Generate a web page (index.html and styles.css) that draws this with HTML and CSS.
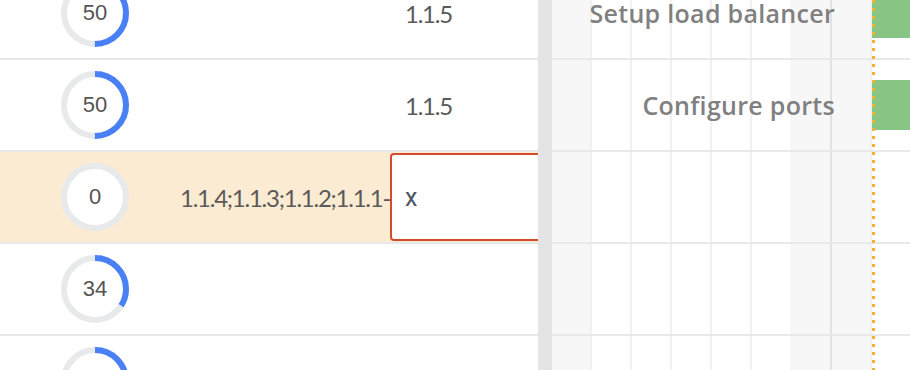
FILE: index.html
```html
<!DOCTYPE html>
<html>
<head>
<meta charset="utf-8">
<link rel="stylesheet" href="styles.css">
</head>
<body>
<div class="app">
  <div class="grid">
    <div class="grid-body">
      <div class="row">
        <div class="cell prog">
          <div class="ring">
            <svg viewBox="0 0 68 68" width="68" height="68"><circle class="track" cx="34" cy="34" r="31"/><circle class="bar" cx="34" cy="34" r="31" stroke-dasharray="97.39 194.78"/></svg>
            <span class="pct">50</span>
          </div>
        </div>
        <div class="cell deps"></div>
        <div class="cell ver">1.1.5</div>
      </div>
      <div class="row">
        <div class="cell prog">
          <div class="ring">
            <svg viewBox="0 0 68 68" width="68" height="68"><circle class="track" cx="34" cy="34" r="31"/><circle class="bar" cx="34" cy="34" r="31" stroke-dasharray="97.39 194.78"/></svg>
            <span class="pct">50</span>
          </div>
        </div>
        <div class="cell deps"></div>
        <div class="cell ver">1.1.5</div>
      </div>
      <div class="row selected">
        <div class="cell prog">
          <div class="ring">
            <svg viewBox="0 0 68 68" width="68" height="68"><circle class="track" cx="34" cy="34" r="31"/></svg>
            <span class="pct">0</span>
          </div>
        </div>
        <div class="cell deps">1.1.4;1.1.3;1.1.2;1.1.1-1.1.0</div>
        <div class="cell ver editing"><div class="editor">x</div></div>
      </div>
      <div class="row">
        <div class="cell prog">
          <div class="ring">
            <svg viewBox="0 0 68 68" width="68" height="68"><circle class="track" cx="34" cy="34" r="31"/><circle class="bar" cx="34" cy="34" r="31" stroke-dasharray="66.23 194.78"/></svg>
            <span class="pct">34</span>
          </div>
        </div>
        <div class="cell deps"></div>
        <div class="cell ver"></div>
      </div>
      <div class="row">
        <div class="cell prog">
          <div class="ring">
            <svg viewBox="0 0 68 68" width="68" height="68"><circle class="track" cx="34" cy="34" r="31"/><circle class="bar" cx="34" cy="34" r="31" stroke-dasharray="97.39 194.78"/></svg>
            <span class="pct">50</span>
          </div>
        </div>
        <div class="cell deps">1.1.5</div>
        <div class="cell ver">1.0.0</div>
      </div>
    </div>
  </div>
  <div class="splitter"></div>
  <div class="gantt">
    <div class="cols">
      <div class="col weekend first"></div>
      <div class="col"></div>
      <div class="col"></div>
      <div class="col"></div>
      <div class="col"></div>
      <div class="col"></div>
      <div class="col weekend"></div>
      <div class="col weekend week"></div>
      <div class="col"></div>
    </div>
    <div class="g-rows">
      <div class="g-row"><span class="label">Setup load balancer</span><div class="task"></div></div>
      <div class="g-row"><span class="label">Configure ports</span><div class="task"></div></div>
      <div class="g-row"></div>
      <div class="g-row"></div>
      <div class="g-row"></div>
    </div>
    <div class="today"></div>
  </div>
</div>
</body>
</html>
```

FILE: styles.css
```css
html, body {
  margin: 0;
  padding: 0;
  background: #ffffff;
  overflow: hidden;
}

.app {
  display: flex;
  width: 910px;
  height: 370px;
  overflow: hidden;
}

.grid {
  width: 538px;
  flex: none;
  overflow: hidden;
}

.grid-body {
  margin-top: -32px;
}

.row {
  display: grid;
  grid-template-columns: 165px 225px 148px;
  height: 90px;
  border-bottom: 2px solid #e8e8e8;
}

.row.selected {
  background: #fbebd3;
}

.cell {
  display: flex;
  align-items: center;
  overflow: hidden;
  white-space: nowrap;
  font-family: "Lato", "Open Sans", sans-serif;
  font-size: 24px;
  letter-spacing: -1.25px;
  color: #5a5a5a;
}

.prog {
  padding-left: 61px;
}

.deps, .ver {
  padding-left: 15px;
}

.ring {
  display: grid;
  place-items: center;
  width: 68px;
  height: 68px;
}

.ring svg, .ring .pct {
  grid-area: 1 / 1;
}

.ring .track {
  fill: #ffffff;
  stroke: #e8e9eb;
  stroke-width: 6;
}

.ring .bar {
  fill: none;
  stroke: #4a80f5;
  stroke-width: 6;
  transform: rotate(-90deg);
  transform-origin: 34px 34px;
}

.pct {
  font-family: "Liberation Sans", Arial, sans-serif;
  font-size: 22px;
  letter-spacing: 0;
  color: #555555;
}

.editing {
  padding: 1px 0 1px 0;
  align-items: stretch;
  overflow: visible;
}

.editor {
  flex: 1;
  display: flex;
  align-items: center;
  margin-right: -8px;
  padding-left: 13px;
  background: #ffffff;
  border: 2px solid #d14b2d;
  border-radius: 4px;
  font-family: "Roboto", "Liberation Sans", sans-serif;
  font-size: 25px;
  letter-spacing: 0;
  color: #4b5563;
}

.splitter {
  width: 14px;
  flex: none;
  background: #e4e4e6;
}

.gantt {
  flex: 1;
  display: grid;
  overflow: hidden;
}

.cols, .g-rows, .today {
  grid-area: 1 / 1;
}

.cols {
  display: grid;
  grid-template-columns: 38px repeat(8, 40px);
}

.col {
  border-left: 2px solid #f1f1f1;
}

.col.first {
  border-left: none;
}

.col.weekend {
  background: #f7f7f7;
  border-left-color: #f7f7f7;
}

.col.week {
  border-left-color: #e2e2e2;
}

.g-rows {
  margin-top: -32px;
}

.g-row {
  height: 90px;
  border-bottom: 2px solid #e9e9e9;
  display: flex;
  align-items: center;
}

.label {
  width: 283px;
  flex: none;
  text-align: right;
  font-family: "Open Sans", "Lato", sans-serif;
  font-weight: 600;
  font-size: 25px;
  letter-spacing: 0.3px;
  color: #808080;
  white-space: nowrap;
}

.task {
  margin-left: 37px;
  width: 120px;
  height: 50px;
  flex: none;
  background: #88c585;
}

.today {
  margin-left: 320px;
  width: 3px;
  background: repeating-linear-gradient(to bottom, #f2b233 0, #f2b233 3px, transparent 3px, transparent 8px);
}
```
